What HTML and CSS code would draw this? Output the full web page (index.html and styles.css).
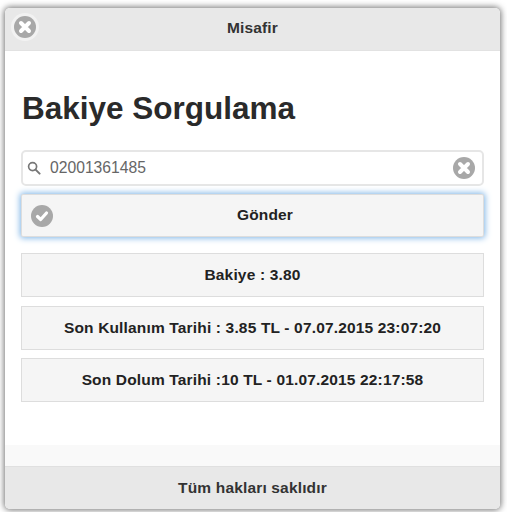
FILE: index.html
```html
<!DOCTYPE html>
<html lang="tr">
<head>
<meta charset="utf-8">
<title>Bakiye Sorgulama</title>
<link rel="stylesheet" href="styles.css">
</head>
<body>
<div class="dialog">
  <header class="bar bar-top">
    <h1 class="bar-title">Misafir</h1>
    <span class="close-btn">
      <svg class="icon" width="22" height="22" viewBox="0 0 22 22"><circle cx="11" cy="11" r="11" fill="#a8a8a8"/><path d="M7 7l8 8M15 7l-8 8" stroke="#fff" stroke-width="4" stroke-linecap="round"/></svg>
    </span>
  </header>
  <main class="content">
    <h2 class="page-title">Bakiye Sorgulama</h2>
    <div class="search">
      <svg class="search-icon" width="14" height="14" viewBox="0 0 14 14"><circle cx="5.6" cy="5.6" r="4" fill="none" stroke="#777" stroke-width="1.7"/><path d="M8.6 8.6l4 4" stroke="#777" stroke-width="2" stroke-linecap="round"/></svg>
      <span class="search-value">02001361485</span>
      <svg class="icon" width="22" height="22" viewBox="0 0 22 22"><circle cx="11" cy="11" r="11" fill="#a8a8a8"/><path d="M7 7l8 8M15 7l-8 8" stroke="#fff" stroke-width="4" stroke-linecap="round"/></svg>
    </div>
    <button class="send" type="button">
      <svg class="send-icon" width="22" height="22" viewBox="0 0 22 22"><circle cx="11" cy="11" r="11" fill="#a8a8a8"/><path d="M6.5 11.5l3.2 3L15.5 8" fill="none" stroke="#fff" stroke-width="3.2" stroke-linecap="round" stroke-linejoin="round"/></svg>
      Gönder
    </button>
    <div class="result">Bakiye : 3.80</div>
    <div class="result">Son Kullanım Tarihi : 3.85 TL - 07.07.2015 23:07:20</div>
    <div class="result">Son Dolum Tarihi :10 TL - 01.07.2015 22:17:58</div>
  </main>
  <div class="spacer"></div>
  <footer class="bar bar-bottom"><span class="bar-title">Tüm hakları saklıdır</span></footer>
</div>
</body>
</html>
```
FILE: styles.css
```css
* { box-sizing: border-box; }
html, body { height: 100%; }
body {
  margin: 0;
  padding: 8px 7px 3px 5px;
  background: #fff;
  font-family: "Liberation Sans", Arial, sans-serif;
  color: #222;
}
.dialog {
  position: relative;
  height: 501px;
  display: flex;
  flex-direction: column;
  background: #fff;
  border-radius: 5px;
  box-shadow: 0 0 6px 1px rgba(0,0,0,.55);
}
.bar {
  display: flex;
  align-items: center;
  justify-content: center;
  background: #e8e8e8;
  flex: none;
}
.bar-top {
  height: 43px;
  border-bottom: 1px solid #e2e2e2;
  border-radius: 5px 5px 0 0;
  padding-bottom: 2px;
}
.bar-bottom {
  height: 43px;
  border-top: 1px solid #e0e0e0;
  border-radius: 0 0 5px 5px;
}
.bar-title {
  margin: 0;
  font-size: 15.5px;
  letter-spacing: .16px;
  font-weight: 700;
  color: #333;
}
.close-btn {
  position: absolute;
  left: 6px;
  top: 5px;
  display: flex;
  padding: 3px;
  border-radius: 50%;
  background: rgba(255,255,255,.45);
}
.icon { display: block; flex: none; }
.content {
  flex: 1;
  padding: 0 16px;
}
.page-title {
  margin: 39px 0 25px;
  font-size: 31.5px;
  line-height: 36px;
  font-weight: 700;
  color: #2a2a2a;
  padding-left: 1px;
}
.search {
  display: flex;
  align-items: center;
  height: 36px;
  margin-top: -1px;
  padding: 0 7px 0 4px;
  border: 2px solid #e6e6e6;
  border-radius: 5px;
  background: #fff;
}
.search-icon { flex: none; margin-right: 9px; }
.search-value {
  flex: 1;
  font-size: 15.7px;
  color: #666;
}
.send {
  position: relative;
  display: block;
  width: 100%;
  height: 43px;
  margin: 8px 0 16px;
  padding: 0 0 1px 25px;
  border: 1px solid #ddd;
  border-radius: 2px;
  background: #f5f5f5;
  box-shadow: 0 0 6px 1px #7db4e6;
  font: 700 15.5px "Liberation Sans", Arial, sans-serif;
  letter-spacing: .16px;
  color: #222;
}
.send-icon {
  position: absolute;
  left: 9px;
  top: 10px;
}
.result {
  display: flex;
  align-items: center;
  justify-content: center;
  height: 44px;
  margin-bottom: 8.5px;
  border: 1px solid #ddd;
  background: #f5f5f5;
  font-size: 15.5px;
  letter-spacing: .16px;
  font-weight: 700;
  color: #222;
}
.spacer {
  flex: none;
  height: 21px;
  background: #f9f9f9;
}
```
